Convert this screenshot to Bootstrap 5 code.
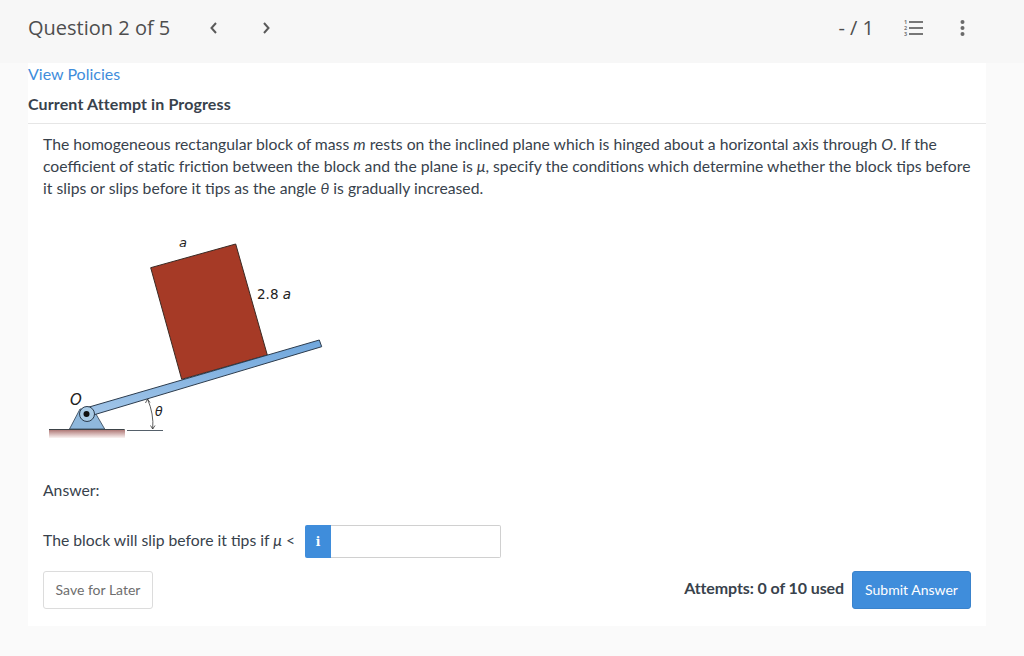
<!DOCTYPE html>
<html lang="en">
<head>
    <meta charset="UTF-8">
    <title>Question 2 of 5</title>
    <link href="https://cdn.jsdelivr.net/npm/bootstrap@5.3.0/dist/css/bootstrap.min.css" rel="stylesheet">
    <style>
        html, body { height: 656px; overflow: hidden; }
        body { background: #fafafa; font-family: "Lato", sans-serif; font-size: 15.72px; color: #38424c; }
        .top-bar { background: #f7f7f7; height: 63px; padding: 0 28px 8px; color: #4e4e4e; font-family: "Open Sans", sans-serif; }
        .q-title { font-size: 20px; line-height: 1; width: 179px; }
        .pager { width: 64px; }
        .score { font-size: 20px; margin-right: 30px; }
        .list-ico { margin-right: 37px; }
        .dots-ico { margin-right: 31px; }
        .sheet { background: #fff; margin: 0 38px 0 28px; height: 563px; }
        .policy { color: #3f8ddb; font-size: 16px; line-height: 22px; display: block; height: 30px; text-decoration: none; }
        .attempt-head { font-weight: 700; font-size: 16px; letter-spacing: .12px; line-height: 22px; height: 31px; border-bottom: 1px solid #e6e6e6; }
        .q-body { padding: 9px 15px 0 15px; line-height: 22px; }
        .q-text { height: 74px; margin: 0 -4px 0 0; }
        .figure-wrap { height: 272px; }
        .answer-label { line-height: 22px; height: 46px; }
        .answer-row { height: 33px; }
        .answer-lead { margin-bottom: 4px; }
        .info-tag { width: 26px; height: 33px; background: #3f8ddb; color: #fff; font-family: "DejaVu Serif", serif; font-weight: 700; font-size: 12px; border-radius: 2px 0 0 2px; margin-left: 10px; }
        .answer-box { width: 170px; height: 33px; border: 1px solid #d0d0d0; border-left: 0; border-radius: 0 2px 2px 0; padding: 0 6px; outline: 0; }
        .foot-row { margin-top: 13px; }
        .btn-later { width: 110px; height: 38px; border: 1px solid #dcdcdc; color: #6e6e6e; font-size: 14px; padding: 0 0 2px; background: #fff; border-radius: 3px; }
        .btn-submit { width: 119px; height: 38px; background: #3f8ddb; border: 1px solid #3a83cc; color: #fff; font-size: 14px; padding: 0 0 2px; border-radius: 3px; margin-left: 8px; }
        .attempts { font-weight: 700; font-size: 16px; letter-spacing: -0.1px; margin-top: -4px; }
    </style>
</head>
<body>
    <div class="top-bar d-flex align-items-center">
        <div class="q-title">Question 2 of 5</div>
        <svg class="pager" height="14" viewBox="0 0 64 14" aria-label="navigation">
            <path d="M9 2 L4.5 7 L9 12" fill="none" stroke="#5a5a5a" stroke-width="2"/>
            <path d="M57 2 L61.5 7 L57 12" fill="none" stroke="#5a5a5a" stroke-width="2"/>
        </svg>
        <div class="ms-auto score">- / 1</div>
        <svg class="list-ico" width="19" height="18" viewBox="0 0 19 18">
            <g fill="#777">
                <rect x="5" y="2" width="14" height="2"/>
                <rect x="5" y="8" width="14" height="2"/>
                <rect x="5" y="14" width="14" height="2"/>
                <text x="0" y="5" font-family="Open Sans" font-weight="700" font-size="5.5">1</text>
                <text x="0" y="11" font-family="Open Sans" font-weight="700" font-size="5.5">2</text>
                <text x="0" y="17" font-family="Open Sans" font-weight="700" font-size="5.5">3</text>
            </g>
        </svg>
        <svg class="dots-ico" width="5" height="18" viewBox="0 0 5 18">
            <g fill="#6a6a6a">
                <circle cx="2.5" cy="3" r="2"/>
                <circle cx="2.5" cy="9" r="2"/>
                <circle cx="2.5" cy="15" r="2"/>
            </g>
        </svg>
    </div>

    <div class="sheet">
        <a class="policy" href="#">View Policies</a>
        <div class="attempt-head">Current Attempt in Progress</div>
        <div class="q-body">
            <p class="q-text">The homogeneous rectangular block of mass <i>m</i> rests on the inclined plane which is hinged about a horizontal axis through <i>O</i>. If the coefficient of static friction between the block and the plane is <i>μ</i>, specify the conditions which determine whether the block tips before it slips or slips before it tips as the angle <i>θ</i> is gradually increased.</p>
            <div class="figure-wrap">
                <svg width="290" height="255" viewBox="43 207 290 255">
                    <defs>
                        <linearGradient id="groundFade" x1="0" y1="0" x2="0" y2="1">
                            <stop offset="0" stop-color="#b07a78"/>
                            <stop offset="1" stop-color="#fbf4f3"/>
                        </linearGradient>
                        <linearGradient id="beamFill" x1="0" y1="0" x2="0" y2="1">
                            <stop offset="0" stop-color="#6fa6dc"/>
                            <stop offset="1" stop-color="#a3c6e8"/>
                        </linearGradient>
                    </defs>
                    <polygon points="150.7,267.7 235.7,244 267.3,355 181.7,379.3" fill="#a63a26" stroke="#3a2a24" stroke-width="1"/>
                    <rect x="49" y="430" width="76" height="8" fill="url(#groundFade)"/>
                    <polygon points="69.5,429 80,409 93,409 104.7,429" fill="#8fb8dc" stroke="#2f3f50" stroke-width="0.8"/>
                    <line x1="49" y1="429.5" x2="124.7" y2="429.5" stroke="#3d4348" stroke-width="1"/>
                    <polygon points="84,408.5 319.3,340 321.7,346.7 90,416" fill="url(#beamFill)" stroke="#2c3c4e" stroke-width="1"/>
                    <circle cx="87" cy="414" r="7.5" fill="#a9cbe6" stroke="#2c3c4e" stroke-width="1"/>
                    <circle cx="86.5" cy="414" r="3" fill="#111"/>
                    <line x1="127" y1="430.5" x2="163" y2="430.5" stroke="#55606a" stroke-width="1"/>
                    <path d="M147.5 399 Q154 414 152.7 429" fill="none" stroke="#333" stroke-width="0.8"/>
                    <path d="M145.5 403 L147.5 399 L150 402.5 M150.5 425.5 L152.7 429 L155 425.5" fill="none" stroke="#333" stroke-width="0.8"/>
                    <text x="70" y="405" font-family="DejaVu Sans" font-size="15" font-style="italic" fill="#222">O</text>
                    <text x="155" y="416" font-family="DejaVu Sans" font-size="12.5" font-style="italic" fill="#222">θ</text>
                    <text x="179" y="247" font-family="DejaVu Sans" font-size="13" font-style="italic" fill="#222">a</text>
                    <text x="257" y="299" font-family="DejaVu Sans" font-size="13.5" fill="#222">2.8 <tspan font-style="italic">a</tspan></text>
                </svg>
            </div>
            <div class="answer-label">Answer:</div>
            <div class="answer-row d-flex align-items-center">
                <span class="answer-lead">The block will slip before it tips if <i>μ</i> &lt;</span>
                <span class="info-tag d-flex align-items-center justify-content-center">i</span>
                <input class="answer-box" type="text" aria-label="answer">
            </div>
            <div class="foot-row d-flex align-items-center">
                <button type="button" class="btn btn-later">Save for Later</button>
                <span class="attempts ms-auto">Attempts: 0 of 10 used</span>
                <button type="button" class="btn btn-submit">Submit Answer</button>
            </div>
        </div>
    </div>
    <script src="https://cdn.jsdelivr.net/npm/bootstrap@5.3.0/dist/js/bootstrap.bundle.min.js"></script>
</body>
</html>
